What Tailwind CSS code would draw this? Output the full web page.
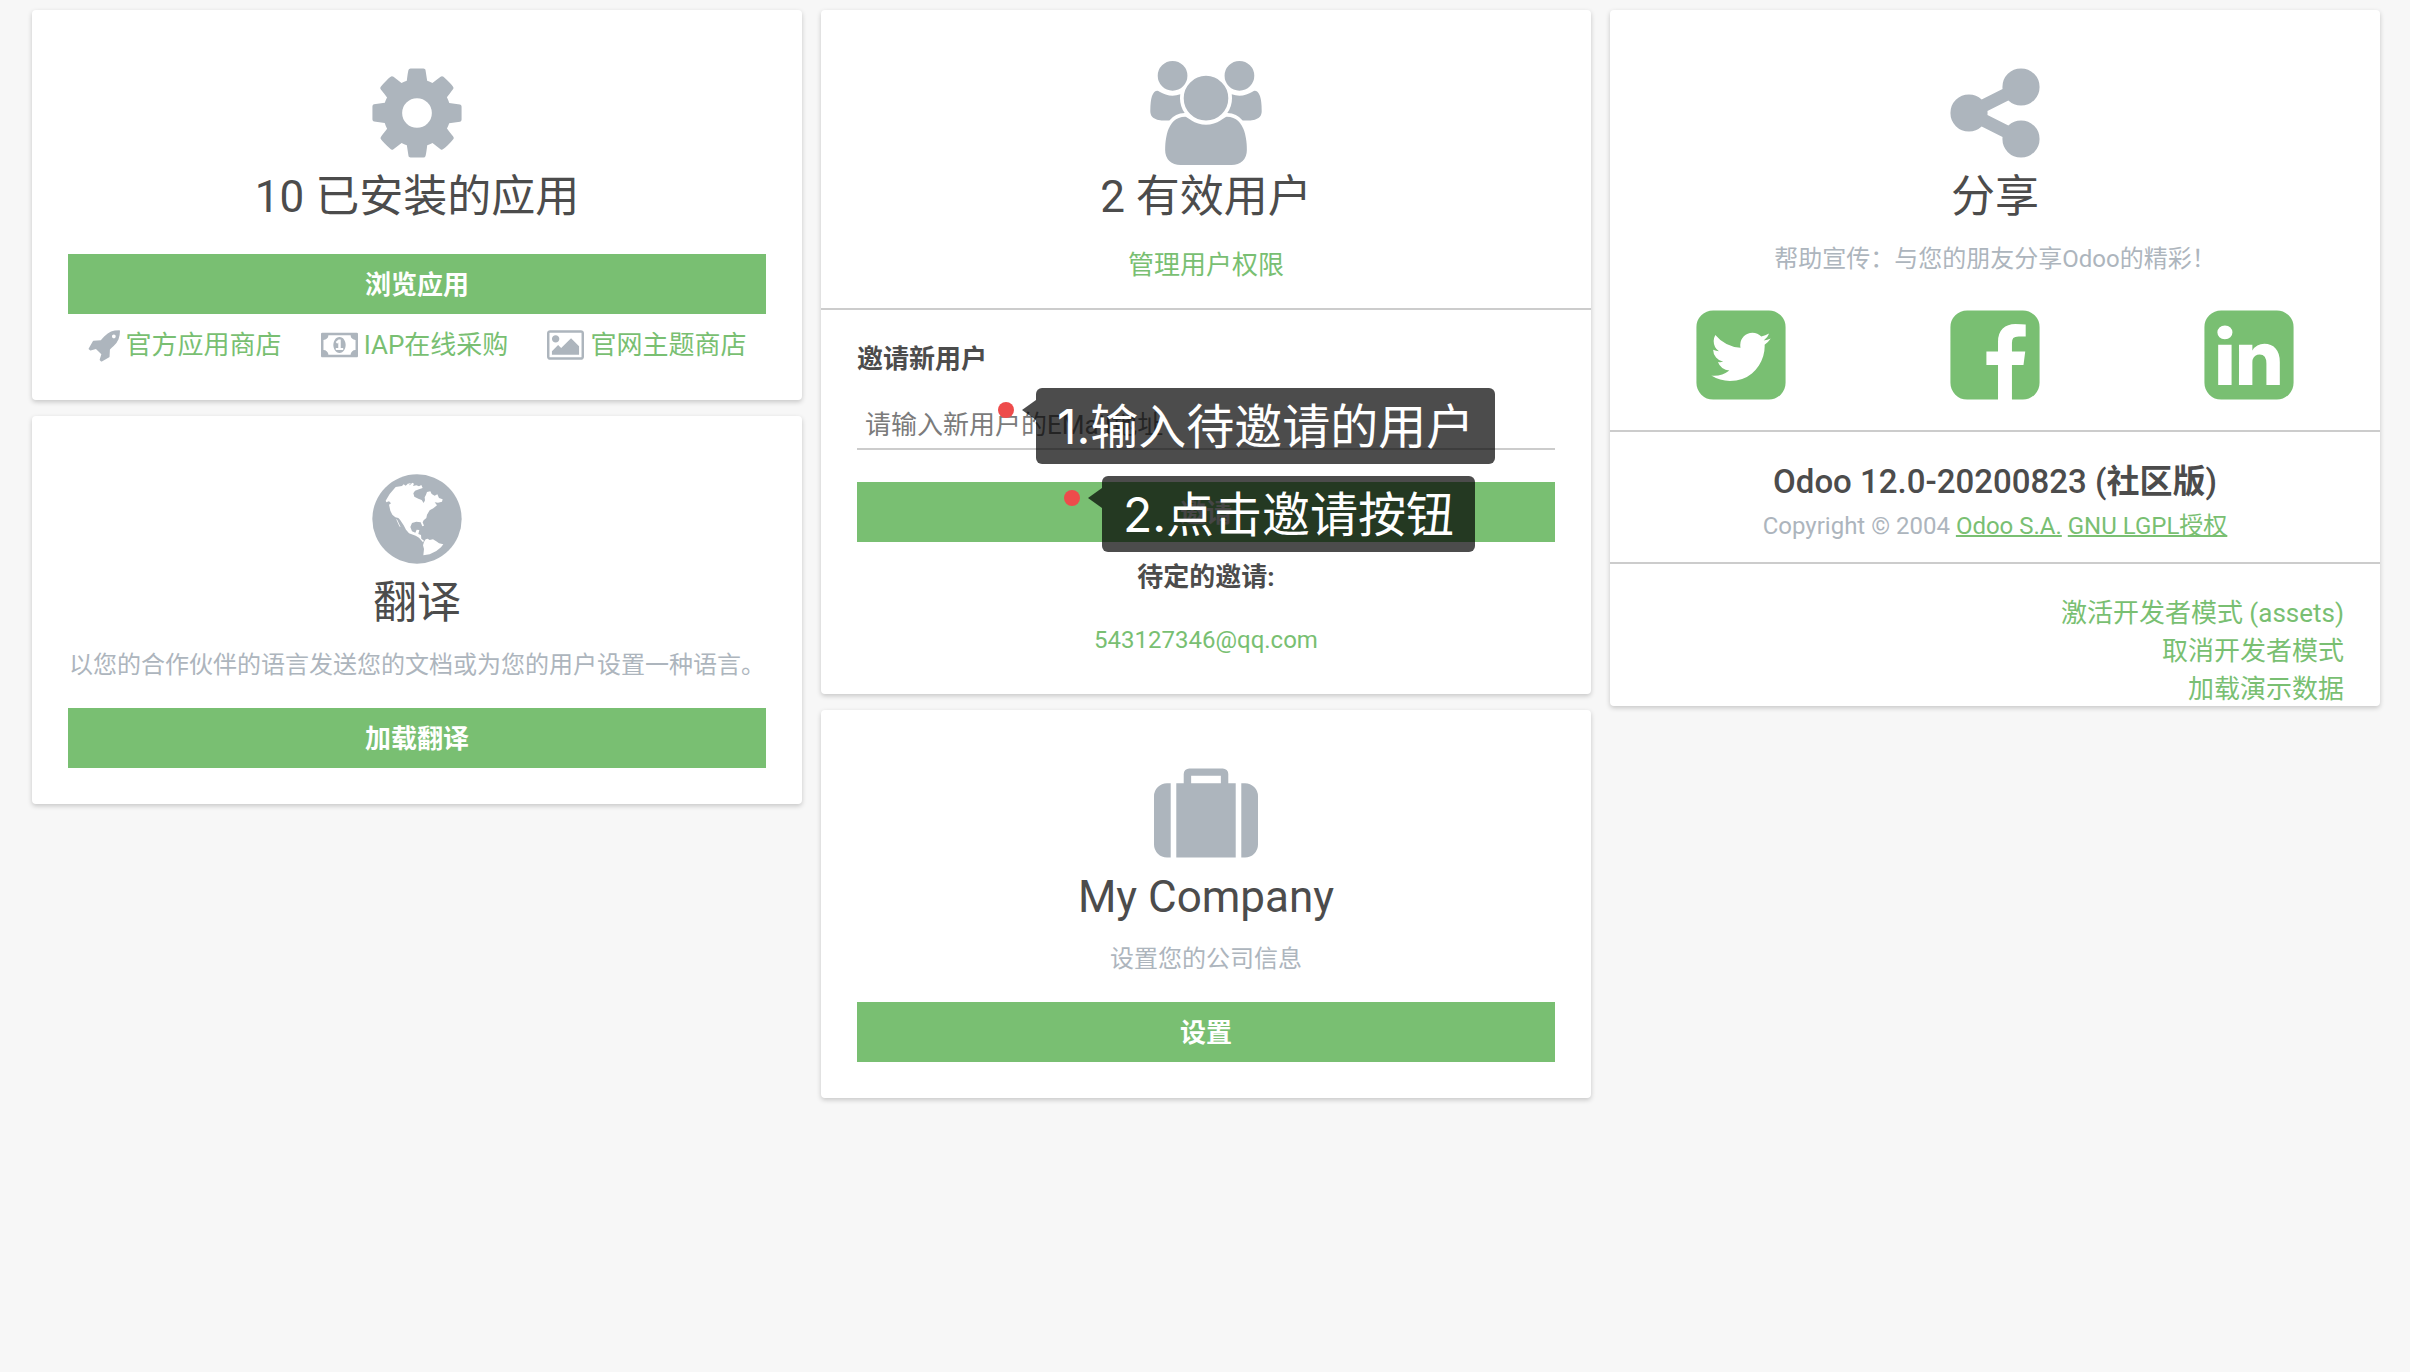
<!DOCTYPE html>
<html lang="zh-CN">
<head>
<meta charset="utf-8">
<title>设置</title>
<script src="https://cdn.jsdelivr.net/npm/@tailwindcss/browser@4"></script>
</head>
<body class="min-h-screen bg-[#f7f7f7] font-[Roboto,'Noto_Sans_CJK_SC',sans-serif] text-[26px] leading-[38px] text-[#4c4c4c]">
<main class="grid grid-cols-3 items-start gap-[19px] pt-[10px] pr-[30px] pl-8">

  <div class="flex flex-col gap-4">
    <section class="rounded-sm bg-white p-9 text-center shadow-[0_2px_5px_rgba(0,0,0,0.2)]">
      <svg class="mx-auto mt-[15px] size-[104px] fill-[#adb5bd]" viewBox="0 0 1792 1792" aria-hidden="true"><path d="M1152 896q0-106-75-181t-181-75-181 75-75 181 75 181 181 75 181-75 75-181zm512-109v222q0 12-8 23t-20 13l-185 28q-19 54-39 91 35 50 107 138 10 12 10 25t-9 23q-27 37-99 108t-94 71q-12 0-26-9l-138-108q-44 23-91 38-16 136-29 186-7 28-36 28h-222q-14 0-24.5-8.5t-11.5-21.5l-28-184q-49-16-90-37l-141 107q-10 9-25 9-14 0-25-11-126-114-165-168-7-10-7-23 0-12 8-23 15-21 51-66.5t54-70.5q-27-50-41-99l-183-27q-13-2-21-12.5t-8-23.5v-222q0-12 8-23t19-13l186-28q14-46 39-92-40-57-107-138-10-12-10-24 0-10 9-23 26-36 98.5-107.5t94.5-71.5q13 0 26 10l138 107q44-23 91-38 16-136 29-186 7-28 36-28h222q14 0 24.5 8.5t11.5 21.5l28 184q49 16 90 37l142-107q9-9 24-9 13 0 25 10 129 119 165 170 7 8 7 22 0 12-8 23-15 21-51 66.5t-54 70.5q26 50 41 98l183 28q13 2 21 12.5t8 23.5z"/></svg>
      <h2 class="text-[44px] leading-[64px]">10 已安装的应用</h2>
      <button type="button" class="mt-[25px] block h-[60px] w-full bg-[#79bf72] pt-0.5 font-bold text-white">浏览应用</button>
      <nav class="mt-3 flex justify-around text-[#79bf72]">
        <a href="#" class="flex items-center gap-1.5"><svg class="h-9 w-8 fill-[#adb5bd]" viewBox="0 0 1664 1792" aria-hidden="true"><path d="M1440 448q0-40-28-68t-68-28-68 28-28 68 28 68 68 28 68-28 28-68zm224-288q0 249-75.5 430.5t-253.5 360.5q-81 80-195 176l-20 379q-2 16-16 26l-384 224q-7 4-16 4-12 0-23-9l-64-64q-13-14-8-32l85-276-281-281-276 85q-3 1-9 1-14 0-23-9l-64-64q-17-19-5-39l224-384q10-14 26-16l379-20q96-114 176-195 188-187 358-258t431-71q14 0 24 9.5t10 22.5z"/></svg>官方应用商店</a>
        <a href="#" class="flex items-center gap-1.5"><svg class="h-9 w-[37px] fill-[#adb5bd]" viewBox="0 0 1920 1792" aria-hidden="true"><path d="M768 1152h384v-96h-128V608H910L762 745l77 80q42-37 55-57h2v288H768v96zm512-256q0 70-21 142t-59.5 134-101.5 101-138 39-138-39-101.5-101-59.5-134-21-142 21-142 59.5-134T822 519t138-39 138 39 101.5 101 59.5 134 21 142zm512 256V640q-106 0-181-75t-75-181H384q0 106-75 181t-181 75v512q106 0 181 75t75 181h1152q0-106 75-181t181-75zm128-832v1152q0 26-19 45t-45 19H64q-26 0-45-19t-19-45V320q0-26 19-45t45-19h1792q26 0 45 19t19 45z"/></svg>IAP在线采购</a>
        <a href="#" class="flex items-center gap-1.5"><svg class="h-9 w-[37px] fill-[#adb5bd]" viewBox="0 0 1920 1792" aria-hidden="true"><path d="M640 576q0 80-56 136t-136 56-136-56-56-136 56-136 136-56 136 56 56 136zm1024 384v448H256v-192l320-320 160 160 512-512zm96-704H160q-13 0-22.5 9.5T128 288v1216q0 13 9.5 22.5t22.5 9.5h1600q13 0 22.5-9.5t9.5-22.5V288q0-13-9.5-22.5T1760 256zm160 32v1216q0 66-47 113t-113 47H160q-66 0-113-47T0 1504V288q0-66 47-113t113-47h1600q66 0 113 47t47 113z"/></svg>官网主题商店</a>
      </nav>
    </section>

    <section class="rounded-sm bg-white p-9 text-center shadow-[0_2px_5px_rgba(0,0,0,0.2)]">
      <svg class="mx-auto mt-[15px] size-[104px]" viewBox="-4 -3 312 312" aria-hidden="true">
        <circle cx="152" cy="153" r="134" fill="#adb5bd"/>
        <path fill="#fff" d="M58 98L70 78 88 57 107 54 112 49 118 53 124 48 130 52 138 44 143 47 140 54 150 52 158 55 165 51 169 60 158 64 146 68 141 76 144 86 156 92 166 96 172 105 176 97 175 88 179 80 182 72 192 70 196 78 205 83 213 79 218 90 229 94 227 101 215 104 205 103 212 112 201 121 190 127 182 140 180 150 172 157 169 163 173 173 168 175 163 163 150 161 137 165 132 177 137 190 147 194 151 185 159 186 156 198 164 201 165 212 173 218 170 223 158 209 148 203 128 196 119 185 112 172 101 155 96 150 87 148 78 140 72 128 68 110 74 106 68 100 60 103zM89 152L93 156 103 178 99 175zM178 214L184 212 190 216 200 214 212 221 218 226 231 229 224 238 210 249 190 259 171 262 173 243 170 232 173 222zM122 48L134 45 129 50z"/>
      </svg>
      <h2 class="text-[44px] leading-[64px]">翻译</h2>
      <p class="mt-3 text-2xl leading-9 whitespace-nowrap text-[#adb5bd]">以您的合作伙伴的语言发送您的文档或为您的用户设置一种语言。</p>
      <button type="button" class="mt-[25px] block h-[60px] w-full bg-[#79bf72] pt-0.5 font-bold text-white">加载翻译</button>
    </section>
  </div>

  <div class="flex flex-col gap-4">
    <section class="rounded-sm bg-white text-center shadow-[0_2px_5px_rgba(0,0,0,0.2)]">
      <div class="border-b-2 border-[#ccc] px-9 pt-9 pb-6">
        <svg class="mx-auto mt-[15px] h-[104px] w-28 fill-[#adb5bd]" viewBox="0 0 1920 1792" aria-hidden="true"><path d="M593 896q-162 5-265 128H194q-82 0-138-40.5T0 865q0-353 124-353 6 0 43.5 21t97.5 42.5T384 597q67 0 133-23-5 37-5 66 0 139 81 256zm1071 637q0 120-73 189.5t-194 69.5H523q-121 0-194-69.5T256 1533q0-53 3.5-103.5t14-109T300 1212t43-97.5 62-81 85.5-53.5T602 960q10 0 43 21.5t73 48 107 48 135 21.5 135-21.5 107-48 73-48 43-21.5q61 0 111.5 20t85.5 53.5 62 81 43 97.5 26.5 108.5 14 109 3.5 103.5zM640 256q0 106-75 181t-181 75-181-75-75-181 75-181T384 0t181 75 75 181zm704 384q0 159-112.5 271.5T960 1024 688.5 911.5 576 640t112.5-271.5T960 256t271.5 112.5T1344 640zm576 225q0 78-56 118.5t-138 40.5h-134q-103-123-265-128 81-117 81-256 0-29-5-66 66 23 133 23 59 0 119-21.5t97.5-42.5 43.5-21q124 0 124 353zm-128-609q0 106-75 181t-181 75-181-75-75-181 75-181 181-75 181 75 75 181z"/></svg>
        <h2 class="text-[44px] leading-[64px]">2 有效用户</h2>
        <a href="#" class="mt-[17px] block text-[#79bf72]">管理用户权限</a>
      </div>
      <form class="px-9 pt-[30px] pb-[35px]">
        <label for="email" class="block text-left font-bold">邀请新用户</label>
        <div class="relative mt-[22px]">
          <input id="email" type="email" placeholder="请输入新用户的EMail地址" class="block h-[50px] w-full border-b-2 border-[#ccc] px-2 pt-0.5 placeholder:text-[#7b7b7b]">
          <div class="absolute -top-3 left-[141px] flex items-start gap-2 font-[Inter,'Noto_Sans_CJK_SC',sans-serif] text-[48px] leading-[78px] whitespace-nowrap text-white">
            <span class="mt-[14px] size-4 rounded-full bg-[#ee4b4b]"></span>
            <span class="flex items-start">
              <svg class="mt-3 h-5 w-[14px] fill-black/70" viewBox="0 0 14 20" aria-hidden="true"><path d="M14 0v20L0 10z"/></svg>
              <span class="h-[76px] rounded-md bg-black/70 px-[21px]">1.输入待邀请的用户</span>
            </span>
          </div>
        </div>
        <div class="relative mt-8">
          <button type="submit" class="block h-[60px] w-full bg-[#79bf72] pt-0.5 font-bold text-[#e6e6e6]">邀请</button>
          <div class="absolute -top-1.5 left-[207px] flex items-start gap-2 font-[Inter,'Noto_Sans_CJK_SC',sans-serif] text-[48px] leading-[78px] whitespace-nowrap text-white">
            <span class="mt-[14px] size-4 rounded-full bg-[#ee4b4b]"></span>
            <span class="flex items-start">
              <svg class="mt-3 h-5 w-[14px] fill-black/70" viewBox="0 0 14 20" aria-hidden="true"><path d="M14 0v20L0 10z"/></svg>
              <span class="h-[76px] rounded-md bg-black/70 px-[21px]">2.点击邀请按钮</span>
            </span>
          </div>
        </div>
        <h3 class="mt-4 font-bold">待定的邀请:</h3>
        <a href="#" class="mt-[25px] block text-2xl leading-[38px] text-[#79bf72]">543127346@qq.com</a>
      </form>
    </section>

    <section class="rounded-sm bg-white p-9 text-center shadow-[0_2px_5px_rgba(0,0,0,0.2)]">
      <svg class="mx-auto mt-[15px] size-[104px] fill-[#adb5bd]" viewBox="0 0 1792 1792" aria-hidden="true"><path d="M640 384h512V256H640v128zM288 384v1280h-64q-92 0-158-66T0 1440V608q0-92 66-158t158-66h64zm1120 0v1280H384V384h128V224q0-40 28-68t68-28h576q40 0 68 28t28 68v160h128zm384 224v832q0 92-66 158t-158 66h-64V384h64q92 0 158 66t66 158z"/></svg>
      <h2 class="text-[44px] leading-[64px]">My Company</h2>
      <p class="mt-3 text-2xl leading-9 text-[#adb5bd]">设置您的公司信息</p>
      <button type="button" class="mt-[25px] block h-[60px] w-full bg-[#79bf72] pt-0.5 font-bold text-white">设置</button>
    </section>
  </div>

  <section class="rounded-sm bg-white text-center shadow-[0_2px_5px_rgba(0,0,0,0.2)]">
    <div class="border-b-2 border-[#ccc] px-1 pt-9 pb-[23px]">
      <svg class="mx-auto mt-[15px] size-[104px] fill-[#adb5bd]" viewBox="0 0 1792 1792" aria-hidden="true"><path d="M1344 1024q133 0 226.5 93.5t93.5 226.5-93.5 226.5-226.5 93.5-226.5-93.5-93.5-226.5q0-12 2-34l-360-180q-92 86-218 86-133 0-226.5-93.5t-93.5-226.5 93.5-226.5 226.5-93.5q126 0 218 86l360-180q-2-22-2-34 0-133 93.5-226.5t226.5-93.5 226.5 93.5 93.5 226.5-93.5 226.5-226.5 93.5q-126 0-218-86l-360 180q2 22 2 34t-2 34l360 180q92-86 218-86z"/></svg>
      <h2 class="text-[44px] leading-[64px]">分享</h2>
      <p class="mt-3 text-2xl leading-9 text-[#adb5bd]">帮助宣传：与您的朋友分享Odoo的精彩！</p>
      <div class="mt-[26px] grid grid-cols-3 justify-items-center fill-[#79bf72]">
        <a href="#" aria-label="Twitter"><svg class="size-[104px]" viewBox="0 0 1792 1792" aria-hidden="true"><path d="M1408 610q-56 25-121 34 68-40 93-117-65 38-134 51-61-66-153-66-87 0-148.5 61.5t-61.5 148.5q0 29 5 48-129-7-242-65t-192-155q-29 50-29 106 0 114 91 175-47-1-100-26v2q0 75 50 133.5t123 72.5q-29 8-51 8-13 0-39-4 21 63 74.5 104t121.5 42q-116 90-261 90-26 0-50-3 148 94 322 94 112 0 210-35.5t168-95 120.5-137 75-162 24.5-168.5q0-18-1-27 63-45 105-109zm256-194v960q0 119-84.5 203.5t-203.5 84.5h-960q-119 0-203.5-84.5t-84.5-203.5v-960q0-119 84.5-203.5t203.5-84.5h960q119 0 203.5 84.5t84.5 203.5z"/></svg></a>
        <a href="#" aria-label="Facebook"><svg class="size-[104px]" viewBox="0 0 1792 1792" aria-hidden="true"><path d="M1376 128q119 0 203.5 84.5t84.5 203.5v960q0 119-84.5 203.5t-203.5 84.5h-188v-595h199l30-232h-229v-148q0-56 23.5-84t91.5-28l122-1v-207q-63-9-178-9-136 0-217.5 80t-81.5 226v171h-200v232h200v595h-532q-119 0-203.5-84.5t-84.5-203.5v-960q0-119 84.5-203.5t203.5-84.5h960z"/></svg></a>
        <a href="#" aria-label="LinkedIn"><svg class="size-[104px]" viewBox="0 0 1792 1792" aria-hidden="true"><path d="M365 1414h231v-694h-231v694zm246-908q-1-52-36-86t-93-34-94.5 34-36.5 86q0 51 35.5 85.5t92.5 34.5h1q59 0 95-34.5t36-85.5zm585 908h231v-398q0-154-73-233t-193-79q-136 0-209 117h2v-101h-231q3 66 0 694h231v-388q0-38 7-56 15-35 45-59.5t74-24.5q116 0 116 157v371zm468-998v960q0 119-84.5 203.5t-203.5 84.5h-960q-119 0-203.5-84.5t-84.5-203.5v-960q0-119 84.5-203.5t203.5-84.5h960q119 0 203.5 84.5t84.5 203.5z"/></svg></a>
      </div>
    </div>
    <div class="border-b-2 border-[#ccc] px-9 pt-7 pb-[18px]">
      <h3 class="text-[33px] leading-[44px] font-medium">Odoo 12.0-20200823 (<b class="font-bold">社区版</b>)</h3>
      <p class="mt-1 text-2xl leading-9 text-[#adb5bd]">Copyright © 2004 <a href="#" class="text-[#79bf72] underline decoration-2">Odoo S.A.</a> <a href="#" class="text-[#79bf72] underline decoration-2">GNU LGPL授权</a></p>
    </div>
    <nav class="-mb-0.5 flex flex-col items-end px-9 pt-[30px] text-[#79bf72]">
      <a href="#">激活开发者模式 (assets)</a>
      <a href="#">取消开发者模式</a>
      <a href="#">加载演示数据</a>
    </nav>
  </section>
</main>
</body>
</html>
